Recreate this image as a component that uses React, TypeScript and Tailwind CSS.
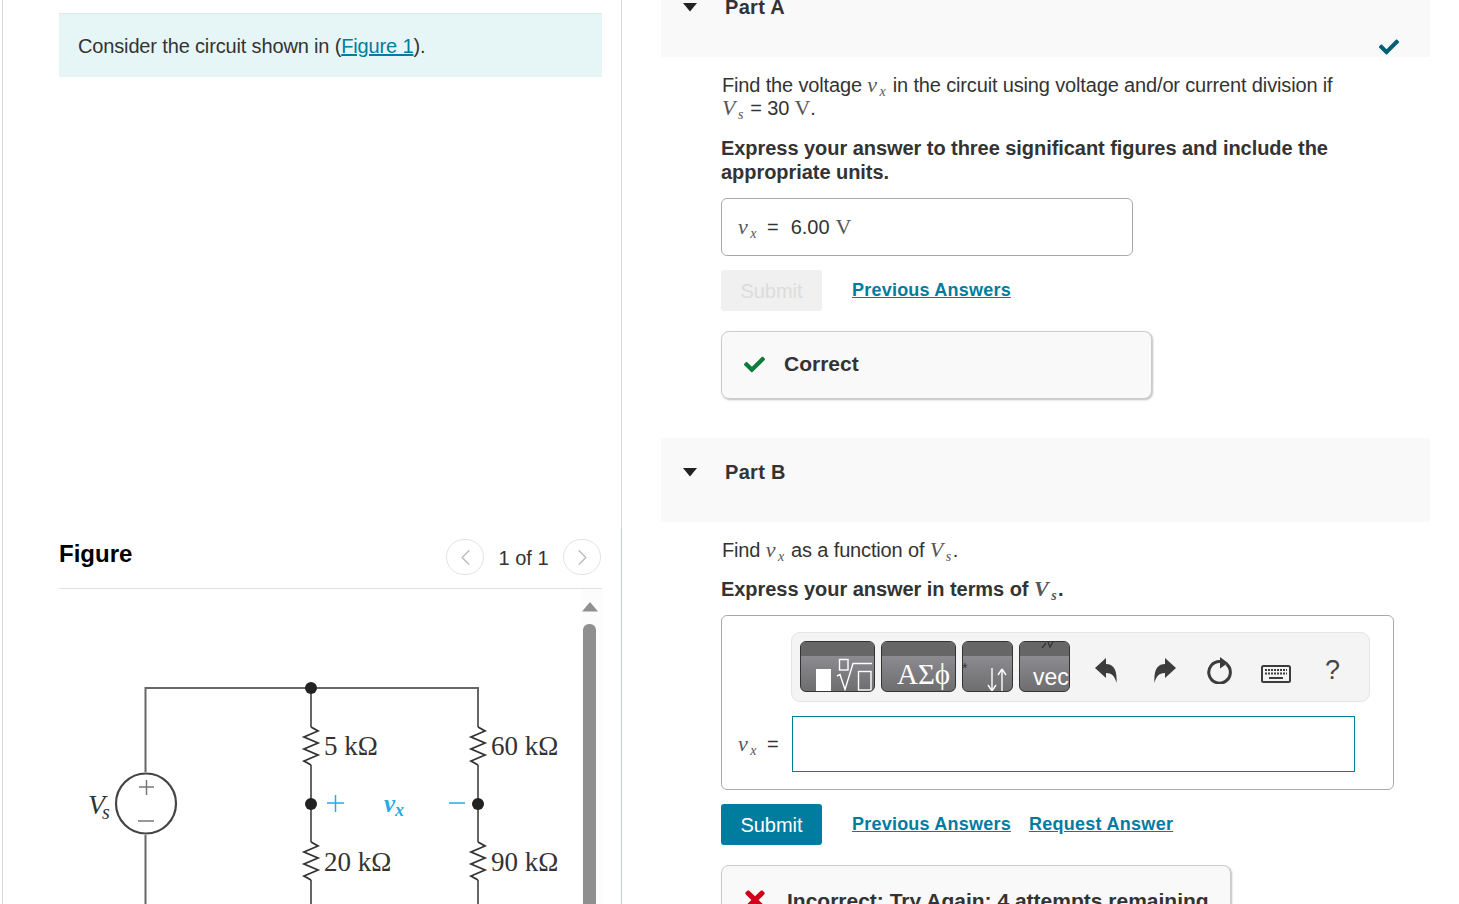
import { FaCheck, FaTimes } from "react-icons/fa";
import { ChevronLeft, ChevronRight } from "lucide-react";

const TEAL = "text-[#007c9e]";

function MathVar({ name, sub, className = "" }: { name: string; sub: string; className?: string }) {
  return (
    <span className={"font-['Liberation_Serif',serif] italic leading-none text-[22px] tracking-[0.5px] text-[#555] mr-[1px] " + className}>
      {name}
      <sub className="text-[14px] leading-none ml-[2px]">{sub}</sub>
    </span>
  );
}

function Unit({ children }: { children: string }) {
  return <span className="font-['Liberation_Serif',serif] leading-none text-[22px] text-[#555]">{children}</span>;
}

function Caret() {
  return (
    <svg width="16" height="10" viewBox="0 0 16 10" className="shrink-0">
      <path d="M1 1h14L8 9.500z" fill="#222" />
    </svg>
  );
}

function Resistor({ x, y }: { x: number; y: number }) {
  const d = [
    `M${x} ${y}`,
    `L${x + 7} ${y + 4}`,
    `L${x - 7} ${y + 10}`,
    `L${x + 7} ${y + 16}`,
    `L${x - 7} ${y + 22}`,
    `L${x + 7} ${y + 28}`,
    `L${x - 7} ${y + 34}`,
    `L${x} ${y + 38}`,
  ].join(" ");
  return <path d={d} fill="none" stroke="#333" strokeWidth="1.8" />;
}

function Circuit() {
  const serif = "font-['Liberation_Serif',serif] text-[27px] fill-[#333]";
  return (
    <svg viewBox="59 589 523 315" width="523" height="315" className="shrink-0">
      <path d="M145.500 772V688H478V727M311 688V727M311 765V842M478 765V842M311 880V904M478 880V904M145.500 835V904" fill="none" stroke="#666" strokeWidth="2" />
      <circle cx="146" cy="803.500" r="30" fill="none" stroke="#444" strokeWidth="2.200" />
      <path d="M139 787h15M146.500 780v15M138 821h16" stroke="#777" strokeWidth="1.500" fill="none" />
      <circle cx="311" cy="688" r="6" fill="#222" />
      <circle cx="311" cy="804" r="6" fill="#222" />
      <circle cx="478" cy="804" r="6" fill="#222" />
      <Resistor x={311} y={727} />
      <Resistor x={311} y={842} />
      <Resistor x={478} y={727} />
      <Resistor x={478} y={842} />
      <text x="324" y="755" className={serif}>5 kΩ</text>
      <text x="491" y="755" className={serif}>60 kΩ</text>
      <text x="324" y="871" className={serif}>20 kΩ</text>
      <text x="491" y="871" className={serif}>90 kΩ</text>
      <text x="88" y="814" className="font-['Liberation_Serif',serif] italic text-[28px] fill-[#333]">
        V<tspan dx="-3" dy="5" className="text-[20px]">s</tspan>
      </text>
      <path d="M327 803h17M335.500 795v17M449 803h16" stroke="#29abe2" strokeWidth="1.500" fill="none" />
      <text x="384" y="812" className="font-['Liberation_Serif',serif] italic font-bold text-[25px] fill-[#29abe2]">
        v<tspan dy="4" className="text-[18px]">x</tspan>
      </text>
    </svg>
  );
}

function NavCircle({ children }: { children: React.ReactNode }) {
  return (
    <div className="w-[38px] h-[36px] rounded-full border border-[#e3e3e3] grid place-items-center text-[#bbb]">
      {children}
    </div>
  );
}

function LeftPane() {
  return (
    <div className="w-[620px] shrink-0 border-l border-[#d9d9d9] h-[904px] overflow-hidden">
      <div className="h-[528px] border-r border-[#d9d9d9] pl-[56px] pr-[19px] pt-[13px]">
        <div className="h-[64px] bg-[#e6f6f6] border-t border-[#d6ecec] pl-[19px] flex items-center text-[20px] tracking-[-0.15px] text-[#333]">
          <span>
            Consider the circuit shown in (<span className={TEAL + " underline"}>Figure 1</span>).
          </span>
        </div>
      </div>
      <div className="h-[376px] border-r border-[#c3d2e0] pl-[56px] pr-[19px]">
        <div className="h-[61px] border-b border-[#e0e0e0] flex items-center justify-between">
          <div className="text-[24px] font-bold text-black -mt-[8px]">Figure</div>
          <div className="flex items-center mr-[1px] -mt-[2px]">
            <NavCircle>
              <ChevronLeft size={27} strokeWidth={1.2} />
            </NavCircle>
            <span className="w-[79px] mt-[2px] text-center text-[20px] text-[#333]">1 of 1</span>
            <NavCircle>
              <ChevronRight size={27} strokeWidth={1.2} />
            </NavCircle>
          </div>
        </div>
        <div className="flex">
          <Circuit />
          <div className="flex-1 h-[315px] flex flex-col bg-[#fcfcfc]">
            <svg width="16" height="10" viewBox="0 0 16 10" className="mt-[13px]">
              <path d="M0 9.500L8 0l8 9.500z" fill="#8f8f8f" />
            </svg>
            <div className="mt-[12px] ml-[1px] w-[13px] flex-1 bg-[#8f8f8f] rounded-t-[6px]" />
          </div>
        </div>
      </div>
    </div>
  );
}

function PartHeader({ label, check }: { label: string; check?: boolean }) {
  return (
    <div className="relative h-[84px] bg-[#f9f9f9] pl-[21px] pt-[34px]">
      <div className="flex items-center h-0 gap-[27px] text-[20px] tracking-[0.3px] font-bold text-[#333]">
        <Caret />
        <span>{label}</span>
      </div>
      {check && <FaCheck className="absolute right-[31px] bottom-0 text-[#005f73] text-[20px]" />}
    </div>
  );
}

function Actions({ disabled, request }: { disabled?: boolean; request?: boolean }) {
  return (
    <div className="flex items-center">
      <div
        className={
          "w-[101px] h-[41px] rounded-[3px] grid place-items-center text-[20px] " +
          (disabled ? "bg-[#f0f0f0] text-[#dcdcdc]" : "bg-[#007c9e] text-white")
        }
      >
        Submit
      </div>
      <a className={"ml-[30px] -mt-[1px] text-[18px] tracking-[0.22px] font-bold underline " + TEAL}>Previous Answers</a>
      {request && (
        <a className={"ml-[18px] -mt-[1px] text-[18px] tracking-[0.28px] font-bold underline " + TEAL}>Request Answer</a>
      )}
    </div>
  );
}

function ToolKey({ width, children }: { width: string; children: React.ReactNode }) {
  return (
    <div className={width + " relative h-[51px] rounded-[6px] border border-[#333] overflow-hidden bg-gradient-to-b from-[#98989e] to-[#6e6e70]"}>
      <div className="h-[14px] bg-[#666]" />
      {children}
    </div>
  );
}

function ReplyIcon({ className = "" }: { className?: string }) {
  return (
    <svg width="22" height="25" viewBox="0 0 22 25" className={className}>
      <path d="M0 10L11 0v6c7 0 11.500 5 10.500 19-1.500-6-4-10-10.500-10v5z" fill="#3c3c3c" />
    </svg>
  );
}

function Toolbar() {
  return (
    <div className="ml-[69px] w-[579px] h-[70px] bg-[#f4f4f4] border border-[#e4e4e4] rounded-[9px] flex items-center pl-[8px]">
      <div className="flex gap-[6px] -mt-[2px]">
        <ToolKey width="w-[75px]">
          <svg viewBox="801 642 73 49" width="73" height="49" className="absolute inset-0" fill="none" stroke="#fff" strokeWidth="1.400">
            <rect x="816" y="669" width="15" height="23" fill="#fff" stroke="none" />
            <rect x="839.500" y="659.500" width="8.500" height="10.500" />
            <path d="M837 676l3-1.500 5 15 8-26h19" />
            <rect x="858.500" y="671.500" width="12.500" height="18.500" />
          </svg>
        </ToolKey>
        <ToolKey width="w-[75px]">
          <span className="absolute left-[15px] top-[15px] text-[29px] leading-[34px] text-white font-['Liberation_Serif',serif]">ΑΣϕ</span>
        </ToolKey>
        <ToolKey width="w-[51px]">
          <span className="absolute left-[-1px] top-[19px] text-[14px] leading-none text-[#333]">*</span>
          <svg viewBox="963 642 49 49" width="49" height="49" className="absolute inset-0" fill="none" stroke="#fff" strokeWidth="1.400">
            <path d="M992 668v23M988 685l4 6M996 685l-4 6" />
            <path d="M1002 692v-23M998 675l4-6M1006 675l-4-6" />
          </svg>
        </ToolKey>
        <ToolKey width="w-[51px]">
          <svg width="14" height="7" viewBox="0 0 14 7" className="absolute left-[21px] top-0" fill="none" stroke="#333" strokeWidth="1.300">
            <path d="M1 6l4-5M7 0l2 5 3-5" />
          </svg>
          <span className="absolute left-[13px] top-[23px] text-[23px] leading-[24px] text-white">vec</span>
        </ToolKey>
      </div>
      <div className="flex items-center">
        <ReplyIcon className="ml-[25px] mt-[7px]" />
        <ReplyIcon className="ml-[37px] mt-[7px] -scale-x-100" />
        <svg width="26" height="27" viewBox="0 0 26 27" className="ml-[30px] mt-[7px]" fill="none">
          <path d="M14 4.500A10.800 10.800 0 1 0 20.500 7" stroke="#3c3c3c" strokeWidth="3" />
          <path d="M14 0l8 6-8 5.500z" fill="#3c3c3c" />
        </svg>
        <svg width="30" height="18" viewBox="0 0 30 18" className="ml-[29px] mt-[14px]" fill="none">
          <rect x="1" y="1" width="28" height="16" rx="1.500" stroke="#3c3c3c" strokeWidth="2" />
          <path d="M4 5h22M4 8.500h22" stroke="#3c3c3c" strokeWidth="2" strokeDasharray="2 1" />
          <path d="M8 13h14" stroke="#3c3c3c" strokeWidth="2" />
        </svg>
        <span className="ml-[34px] text-[27px] text-[#444] mt-[6px]">?</span>
      </div>
    </div>
  );
}

function RightPane() {
  return (
    <div className="w-[769px] ml-[39px] shrink-0 -mt-[27px] text-[#333]">
      <PartHeader label="Part A" check />
      <div className="pl-[60px]">
        <p className="mt-[17px] pl-[1px] h-[46px] whitespace-nowrap text-[20px] leading-[23px] tracking-[-0.15px]">
          Find the voltage <MathVar name="v" sub="x" /> in the circuit using voltage and/or current division if
          <br />
          <MathVar name="V" sub="s" /> = 30 <Unit>V</Unit>.
        </p>
        <p className="mt-[16px] w-[640px] text-[20px] leading-[24px] font-bold tracking-[-0.05px]">
          Express your answer to three significant figures and include the appropriate units.
        </p>
        <div className="mt-[14px] w-[412px] h-[58px] border border-[#aaa] rounded-[6px] flex items-center pl-[16px] text-[20px]">
          <MathVar name="v" sub="x" />
          <span className="ml-[9px]">=</span>
          <span className="ml-[12px]">6.00</span>
          <span className="ml-[6px]"><Unit>V</Unit></span>
        </div>
        <div className="mt-[14px]">
          <Actions disabled />
        </div>
        <div className="mt-[20px] w-[431px] h-[68px] rounded-[8px] border border-[#ccc] bg-[#f9f9f9] shadow-[1px_1px_2px_rgba(0,0,0,0.25)] flex items-center pl-[22px] pb-[2px]">
          <FaCheck className="text-[#0a7d3c] text-[21px]" />
          <span className="ml-[19px] text-[21px] font-bold">Correct</span>
        </div>
      </div>
      <div className="mt-[39px]">
        <PartHeader label="Part B" />
      </div>
      <div className="pl-[60px]">
        <p className="mt-[17px] pl-[1px] h-[23px] text-[20px] leading-[23px] tracking-[-0.15px]">
          Find <MathVar name="v" sub="x" /> as a function of <MathVar name="V" sub="s" />.
        </p>
        <p className="mt-[15px] h-[24px] text-[20px] leading-[24px] font-bold tracking-[-0.05px]">
          Express your answer in terms of <MathVar name="V" sub="s" />.
        </p>
        <div className="mt-[14px] w-[673px] h-[175px] border border-[#aaa] rounded-[6px] pt-[16px]">
          <Toolbar />
          <div className="mt-[14px] flex items-center">
            <div className="w-[70px] pl-[16px] text-[20px] whitespace-nowrap flex items-center">
              <MathVar name="v" sub="x" />
              <span className="ml-[9px]">=</span>
            </div>
            <div className="w-[563px] h-[56px] border border-[#007c9e]" />
          </div>
        </div>
        <div className="mt-[14px]">
          <Actions request />
        </div>
        <div className="mt-[20px] w-[510px] h-[68px] rounded-[8px] border border-[#ccc] bg-[#f9f9f9] shadow-[1px_1px_2px_rgba(0,0,0,0.25)] flex items-center pl-[19px] pt-[2px]">
          <FaTimes className="text-[#d0021b] text-[28px]" />
          <span className="ml-[18px] mt-[2px] text-[21px] font-bold whitespace-nowrap">Incorrect; Try Again; 4 attempts remaining</span>
        </div>
      </div>
    </div>
  );
}

export default function App() {
  return (
    <div className="w-[1459px] h-[904px] overflow-hidden bg-white pl-[2px] flex font-['Liberation_Sans',Arial,sans-serif]">
      <LeftPane />
      <RightPane />
    </div>
  );
}
